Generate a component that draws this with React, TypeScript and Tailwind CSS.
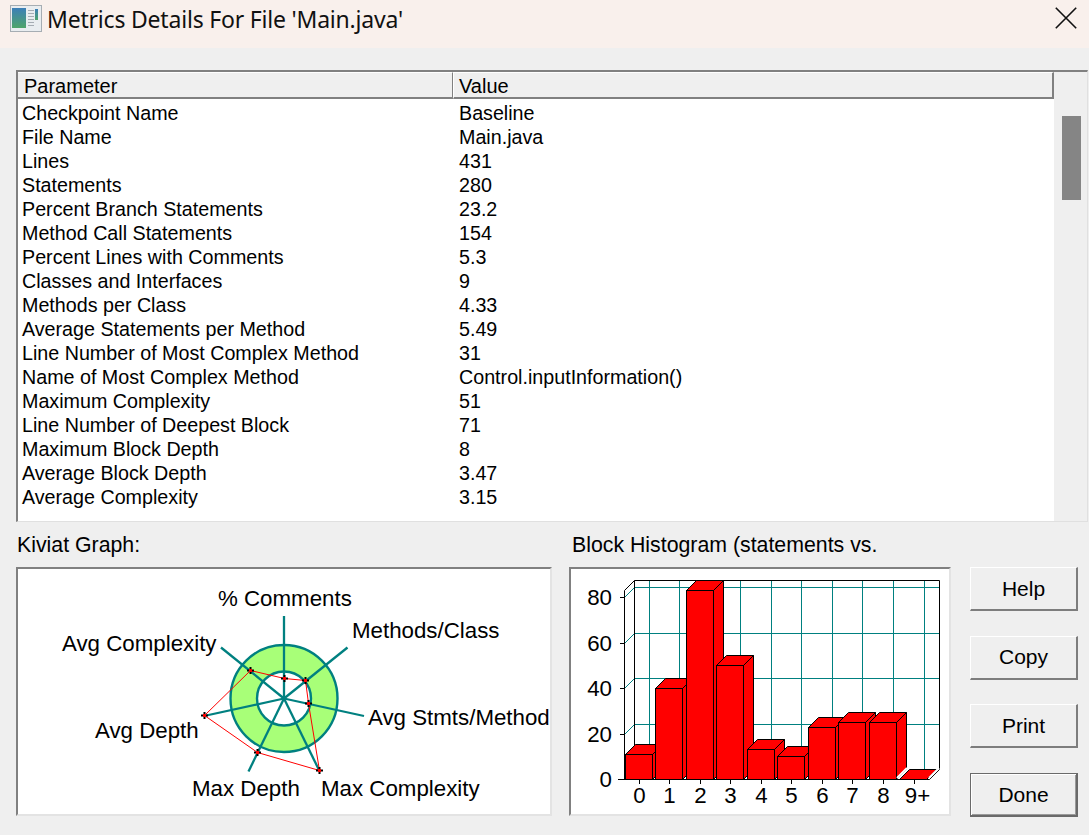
const METRICS = [
  ["Checkpoint Name", "Baseline"],
  ["File Name", "Main.java"],
  ["Lines", "431"],
  ["Statements", "280"],
  ["Percent Branch Statements", "23.2"],
  ["Method Call Statements", "154"],
  ["Percent Lines with Comments", "5.3"],
  ["Classes and Interfaces", "9"],
  ["Methods per Class", "4.33"],
  ["Average Statements per Method", "5.49"],
  ["Line Number of Most Complex Method", "31"],
  ["Name of Most Complex Method", "Control.inputInformation()"],
  ["Maximum Complexity", "51"],
  ["Line Number of Deepest Block", "71"],
  ["Maximum Block Depth", "8"],
  ["Average Block Depth", "3.47"],
  ["Average Complexity", "3.15"],
];

const TEAL = "#008080";

const SPOKES = [
  [284, 616],
  [347.5, 647.5],
  [364, 716],
  [319.5, 771],
  [248.5, 771.5],
  [204, 716],
  [221, 647.5],
];

const KIVIAT_POINTS = [
  [284.5, 678.5],
  [305.5, 680.5],
  [308.5, 703.5],
  [319.5, 770.5],
  [257.5, 752.5],
  [204.5, 715.5],
  [250.5, 670.5],
];

const KIVIAT_LABELS: [string, number, number][] = [
  ["% Comments", 218, 606],
  ["Methods/Class", 352, 638],
  ["Avg Complexity", 62, 651],
  ["Avg Stmts/Method", 368, 725],
  ["Avg Depth", 95, 738],
  ["Max Depth", 192, 796],
  ["Max Complexity", 321, 796],
];

const BARS = [
  { x: 625.5, top: 754.5, label: "0", tick: 639.5 },
  { x: 655.5, top: 688.5, label: "1", tick: 669.5 },
  { x: 686.5, top: 590.5, label: "2", tick: 700.5 },
  { x: 716.5, top: 665.5, label: "3", tick: 730.5 },
  { x: 747.5, top: 749.5, label: "4", tick: 761.5 },
  { x: 777.5, top: 756.5, label: "5", tick: 791.5 },
  { x: 808.5, top: 727.5, label: "6", tick: 822.5 },
  { x: 838.5, top: 722.5, label: "7", tick: 852.5 },
  { x: 869.5, top: 722.5, label: "8", tick: 883.5 },
  { x: 899.5, top: 779.5, label: "9+", tick: 914.5 },
];

const GRID_X = [649.5, 679.5, 710.5, 740.5, 771.5, 801.5, 832.5, 862.5, 893.5, 924.5];
const GRID_Y = [
  { y: 769.5, label: "0" },
  { y: 724.5, label: "20" },
  { y: 678.5, label: "40" },
  { y: 633.5, label: "60" },
  { y: 587.5, label: "80" },
];

function TitleIcon() {
  return (
    <svg width="32" height="27" viewBox="0 0 32 27" className="shrink-0">
      <defs>
        <linearGradient id="pane" x1="0" y1="0" x2="0" y2="1">
          <stop offset="0" stopColor="#3c7fb8" />
          <stop offset="1" stopColor="#4fa56a" />
        </linearGradient>
      </defs>
      <rect x="0.5" y="0.5" width="31" height="26" fill="#e9edf0" stroke="#a6adb3" />
      <rect x="2" y="3" width="14" height="20" fill="url(#pane)" />
      <rect x="18" y="5" width="6" height="1" fill="#a5acb3" />
      <rect x="18" y="8" width="6" height="1" fill="#a5acb3" />
      <rect x="18" y="11" width="6" height="1" fill="#a5acb3" />
      <rect x="18" y="14" width="6" height="1" fill="#a5acb3" />
      <rect x="18" y="17" width="6" height="1" fill="#a5acb3" />
      <rect x="18" y="20" width="6" height="1" fill="#a5acb3" />
      <rect x="25" y="4" width="3" height="11" fill="url(#pane)" />
    </svg>
  );
}

function KiviatGraph() {
  return (
    <svg viewBox="18 569 532 245" className="block h-full w-full">
      <circle cx="284" cy="698.5" r="53.5" fill="#a8ff78" stroke={TEAL} strokeWidth="2.4" />
      <circle cx="284" cy="698.5" r="27" fill="#ffffff" stroke={TEAL} strokeWidth="2.4" />
      {SPOKES.map(([x, y], i) => (
        <line key={i} x1="284" y1="698.5" x2={x} y2={y} stroke={TEAL} strokeWidth="2.3" />
      ))}
      <polygon
        points={KIVIAT_POINTS.map((p) => p.join(",")).join(" ")}
        fill="none"
        stroke="#ff0000"
        strokeWidth="1"
      />
      {KIVIAT_POINTS.map(([x, y], i) => (
        <g key={i}>
          <path d={`M${x - 3.5} ${y}H${x + 3.5}M${x} ${y - 3.5}V${y + 3.5}`} stroke="#000000" strokeWidth="2" />
          <rect x={x - 1.5} y={y - 1.5} width="3" height="3" fill="#ff0000" />
        </g>
      ))}
      {KIVIAT_LABELS.map(([text, x, y]) => (
        <text key={text} x={x} y={y} fontSize="22.3" fill="#000000">
          {text}
        </text>
      ))}
    </svg>
  );
}

function Bar({ x, top }: { x: number; top: number }) {
  const w = 27;
  const d = 10;
  const bottom = 779.5;
  return (
    <g stroke="#000000" strokeWidth="1" fill="#ff0000" strokeLinejoin="miter">
      <polygon points={`${x + w},${top} ${x + w + d},${top - d} ${x + w + d},${bottom - d} ${x + w},${bottom}`} />
      <polygon points={`${x},${top} ${x + d},${top - d} ${x + w + d},${top - d} ${x + w},${top}`} />
      <rect x={x} y={top} width={w} height={bottom - top} />
    </g>
  );
}

function BlockHistogram() {
  return (
    <svg viewBox="571 569 378 245" className="block h-full w-full">
      {GRID_X.map((x) => (
        <line key={x} x1={x} y1="580.5" x2={x} y2="769.5" stroke={TEAL} />
      ))}
      {GRID_Y.slice(1).map(({ y }) => (
        <g key={y}>
          <line x1="634.5" y1={y} x2="939.5" y2={y} stroke={TEAL} />
          <line x1="624.5" y1={y + 10} x2="634.5" y2={y} stroke={TEAL} />
        </g>
      ))}
      <path
        d="M624.5 779.5V590.5L634.5 580.5H939.5V769.5L929.5 779.5M634.5 580.5V769.5L624.5 779.5"
        fill="none"
        stroke="#000000"
      />
      <path d="M618 779.5H929.5" stroke="#000000" />
      {GRID_Y.map(({ y, label }) => (
        <g key={label}>
          <line x1="620" y1={y + 10} x2="624.5" y2={y + 10} stroke="#000000" />
          <text x="612" y={y + 17} fontSize="22.3" textAnchor="end" fill="#000000">
            {label}
          </text>
        </g>
      ))}
      {BARS.slice(0, 9).map((b) => (
        <Bar key={b.label} x={b.x} top={b.top} />
      ))}
      <polygon points="899.5,779.5 909.5,769.5 936.5,769.5 926.5,779.5" fill="#ff0000" stroke="#000000" />
      <path d="M897 778L907 768M929 778L939 768" stroke="#ffffff" strokeWidth="2" />
      {BARS.map((b) => (
        <g key={b.label}>
          <line x1={b.tick} y1="779.5" x2={b.tick} y2="784" stroke="#000000" />
          <text x={b.tick + (b.label === "9+" ? 3 : 0)} y="803" fontSize="22.3" textAnchor="middle" fill="#000000">
            {b.label}
          </text>
        </g>
      ))}
    </svg>
  );
}

function DialogButton({ label, active }: { label: string; active?: boolean }) {
  return (
    <button
      type="button"
      className={
        active
          ? "flex h-[44px] items-center justify-center border-2 border-t-[1px] border-l-[1px] border-[#6a6a6a] bg-[#efefef] text-[21px] text-black shadow-[inset_1px_1px_0_#ffffff,inset_-1px_-1px_0_#9a9a9a]"
          : "flex h-[44px] items-center justify-center border-t border-l border-t-white border-l-white border-r-2 border-b-2 border-r-[#7d7d7d] border-b-[#7d7d7d] bg-[#efefef] text-[21px] text-black"
      }
    >
      {label}
    </button>
  );
}

export default function App() {
  return (
    <div className="flex h-[835px] w-full flex-col bg-[#efefef] font-['Liberation_Sans',Arial,sans-serif] text-black">
      <div className="flex h-12 shrink-0 items-start bg-[#f9f0ec] pt-[5px] pr-[12px] pl-[10px]">
        <TitleIcon />
        <span className="-mt-px ml-[5px] font-['Noto_Sans',sans-serif] text-[23px] leading-[30px] tracking-[-0.2px] text-[#111111]">
          Metrics Details For File 'Main.java'
        </span>
        <svg width="22" height="22" viewBox="0 0 22 22" className="mt-[2px] ml-auto">
          <path d="M0.8 0.8L21.2 21.2M21.2 0.8L0.8 21.2" stroke="#111111" strokeWidth="1.6" fill="none" />
        </svg>
      </div>

      <div className="flex flex-1 flex-col pt-[22px] pr-px pl-4">
        <div className="flex h-[452px] border-t-2 border-r border-b border-l-2 border-t-[#808080] border-r-[#e0e0e0] border-b-[#e0e0e0] border-l-[#808080]">
          <div className="flex flex-1 flex-col bg-white">
            <div className="grid h-[27px] shrink-0 grid-cols-[435px_1fr] grid-rows-[27px] bg-[#efefef] text-[20px] leading-[26px]">
              <div className="overflow-hidden border-t border-r border-b-2 border-t-white border-r-[#808080] border-b-[#808080] pl-[6px]">
                Parameter
              </div>
              <div className="overflow-hidden border-t border-r-2 border-b-2 border-l border-t-white border-r-[#808080] border-b-[#808080] border-l-white pl-[5px]">
                Value
              </div>
            </div>
            <div className="pt-[2px] pl-1 text-[19.7px] leading-[24px]">
              {METRICS.map(([name, value]) => (
                <div key={name} className="grid grid-cols-[437px_1fr]">
                  <span>{name}</span>
                  <span>{value}</span>
                </div>
              ))}
            </div>
          </div>
          <div className="w-[33px] shrink-0 bg-[#efefef] pt-[44px] pl-[8px]">
            <div className="h-[84px] w-[19px] bg-[#858585]" />
          </div>
        </div>

        <div className="flex">
          <div className="flex w-[536px] flex-col">
            <div className="flex h-[45px] items-center pt-[2px] pl-px text-[21.3px]">Kiviat Graph:</div>
            <div className="h-[249px] border-2 border-t-[#808080] border-r-[#e3e3e3] border-b-[#e3e3e3] border-l-[#808080] bg-white">
              <KiviatGraph />
            </div>
          </div>
          <div className="ml-[17px] flex w-[382px] flex-col">
            <div className="flex h-[45px] items-center pt-[2px] pl-[3px] text-[21.3px]">Block Histogram (statements vs.</div>
            <div className="h-[249px] border-2 border-t-[#808080] border-r-[#e3e3e3] border-b-[#e3e3e3] border-l-[#808080] bg-white">
              <BlockHistogram />
            </div>
          </div>
          <div className="mt-[45px] ml-[19px] flex h-[250px] w-[108px] flex-col justify-between">
            <DialogButton label="Help" />
            <DialogButton label="Copy" />
            <DialogButton label="Print" />
            <DialogButton label="Done" active />
          </div>
        </div>
      </div>
    </div>
  );
}
